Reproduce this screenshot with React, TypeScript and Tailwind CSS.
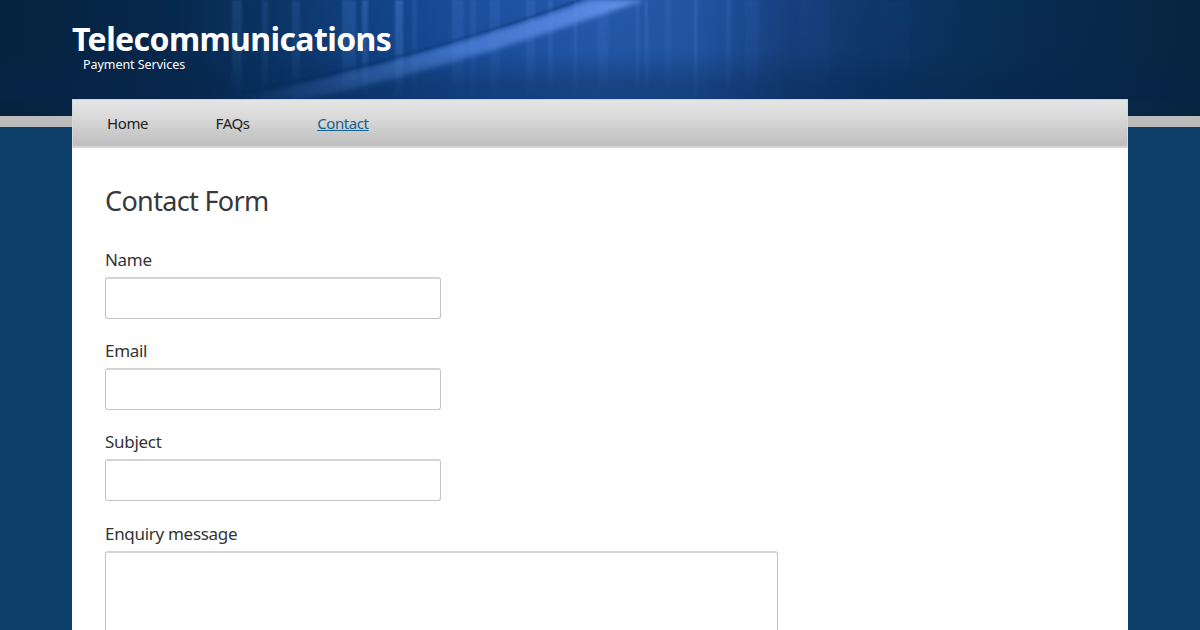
const font = "font-['Noto_Sans','Open_Sans',sans-serif]";

const streaks = [
  [232, 10, 0.35], [262, 6, 0.3], [292, 8, 0.3], [342, 14, 0.45], [362, 6, 0.6], [395, 8, 0.7], [412, 5, 0.3],
  [452, 12, 0.35], [470, 6, 0.3], [490, 10, 0.3], [526, 9, 0.35], [548, 5, 0.4], [574, 3, 0.45], [598, 10, 0.25],
  [636, 3, 0.4], [645, 3, 0.45], [665, 6, 0.25], [694, 3, 0.5], [726, 5, 0.3], [745, 14, 0.15], [800, 30, 0.08], [880, 30, 0.06],
];

function HeaderArt() {
  return (
    <svg className="absolute inset-0 h-full w-full" viewBox="0 0 1200 116" preserveAspectRatio="none">
      <defs>
        <linearGradient id="sweep" x1="0" y1="0" x2="1" y2="0">
          <stop offset="0" stopColor="#4f86e0" stopOpacity="0" />
          <stop offset="0.3" stopColor="#4f86e0" stopOpacity="0.55" />
          <stop offset="0.8" stopColor="#5d90ea" stopOpacity="0.8" />
          <stop offset="1" stopColor="#6a9bf0" stopOpacity="0.9" />
        </linearGradient>
        <linearGradient id="fade" x1="0" y1="0" x2="0" y2="1">
          <stop offset="0" stopColor="#5f93e4" stopOpacity="0.5" />
          <stop offset="0.75" stopColor="#5f93e4" stopOpacity="0.3" />
          <stop offset="1" stopColor="#5f93e4" stopOpacity="0" />
        </linearGradient>
        <linearGradient id="floor" x1="0" y1="0" x2="0" y2="1">
          <stop offset="0" stopColor="#06244a" stopOpacity="0" />
          <stop offset="0.5" stopColor="#06244a" stopOpacity="0.05" />
          <stop offset="0.85" stopColor="#06244a" stopOpacity="0.4" />
        </linearGradient>
        <filter id="soft"><feGaussianBlur stdDeviation="2.5" /></filter>
        <filter id="softer"><feGaussianBlur stdDeviation="1.2" /></filter>
      </defs>
      <g filter="url(#softer)">
        {streaks.map(([x, w, o]) => (
          <rect key={x} x={x} y="0" width={w} height="100" fill="url(#fade)" opacity={o} />
        ))}
      </g>
      <path d="M230 100 C 340 78, 480 40, 590 0 L 645 0 C 540 36, 420 76, 300 100 Z" fill="url(#sweep)" filter="url(#soft)" />
      <path d="M220 96 C 350 74, 480 36, 580 0" fill="none" stroke="#0a2f6a" strokeOpacity="0.7" strokeWidth="1.5" filter="url(#softer)" />
      <rect x="0" y="0" width="1200" height="100" fill="url(#floor)" />
    </svg>
  );
}

function Field({ label, large }: { label: string; large?: boolean }) {
  return (
    <label className="block">
      <span className="block text-[17px] leading-[20px] tracking-[-0.3px] text-[#333]">{label}</span>
      {large ? (
        <textarea className="mt-[7px] block h-[120px] w-[673px] resize-none rounded-[3px] border border-[#c4c4c4] border-t-2 border-t-[#d4d4d4] bg-white" />
      ) : (
        <input className="mt-[7px] block h-[42px] w-[336px] rounded-[3px] border border-[#c4c4c4] border-t-2 border-t-[#d4d4d4] bg-white" />
      )}
    </label>
  );
}

export default function App() {
  return (
    <div className={`h-[630px] w-[1200px] overflow-hidden bg-[#0e3f68] ${font}`}>
      <header className="relative h-[116px] bg-[linear-gradient(90deg,#05233f_0%,#06274a_13%,#0a3363_22%,#114285_31%,#1b50a0_40%,#2459ab_50%,#2155a3_58%,#163f7c_66%,#0d3565_74%,#082c50_86%,#05243f_100%)]">
        <HeaderArt />
        <div className="relative ml-[72px] pt-[21px] text-white">
          <h1 className="text-[32px] leading-[36px] font-bold tracking-[-0.6px]">Telecommunications</h1>
          <p className="mt-[1px] ml-[11px] text-[12.5px] leading-[14px] tracking-[-0.05px]">Payment Services</p>
        </div>
      </header>
      <div className="h-[11px] bg-[#bcbcbc]" />
      <div className="relative mx-auto -mt-[28px] w-[1056px]">
        <nav className="flex h-[49px] items-center gap-[67.5px] border-x border-t border-b-2 border-x-[#d6dbdf] border-t-[#c9d3dc] border-b-[#d4d4d4] bg-[linear-gradient(180deg,#e4e4e4_0%,#dcdcdc_30%,#bebebe_100%)] pl-[34px] text-[15px] tracking-[-0.4px] text-[#222]">
          <a>Home</a>
          <a>FAQs</a>
          <a className="text-[#14608f] underline">Contact</a>
        </nav>
        <main className="h-[490px] bg-white pt-[36px] pl-[33px]">
          <h2 className="text-[27px] leading-[34px] tracking-[-0.65px] text-[#383838]">Contact Form</h2>
          <div className="mt-[32px] flex flex-col gap-[22px]">
            <Field label="Name" />
            <Field label="Email" />
            <Field label="Subject" />
            <div className="mt-[1px]">
              <Field label="Enquiry message" large />
            </div>
          </div>
        </main>
      </div>
    </div>
  );
}
